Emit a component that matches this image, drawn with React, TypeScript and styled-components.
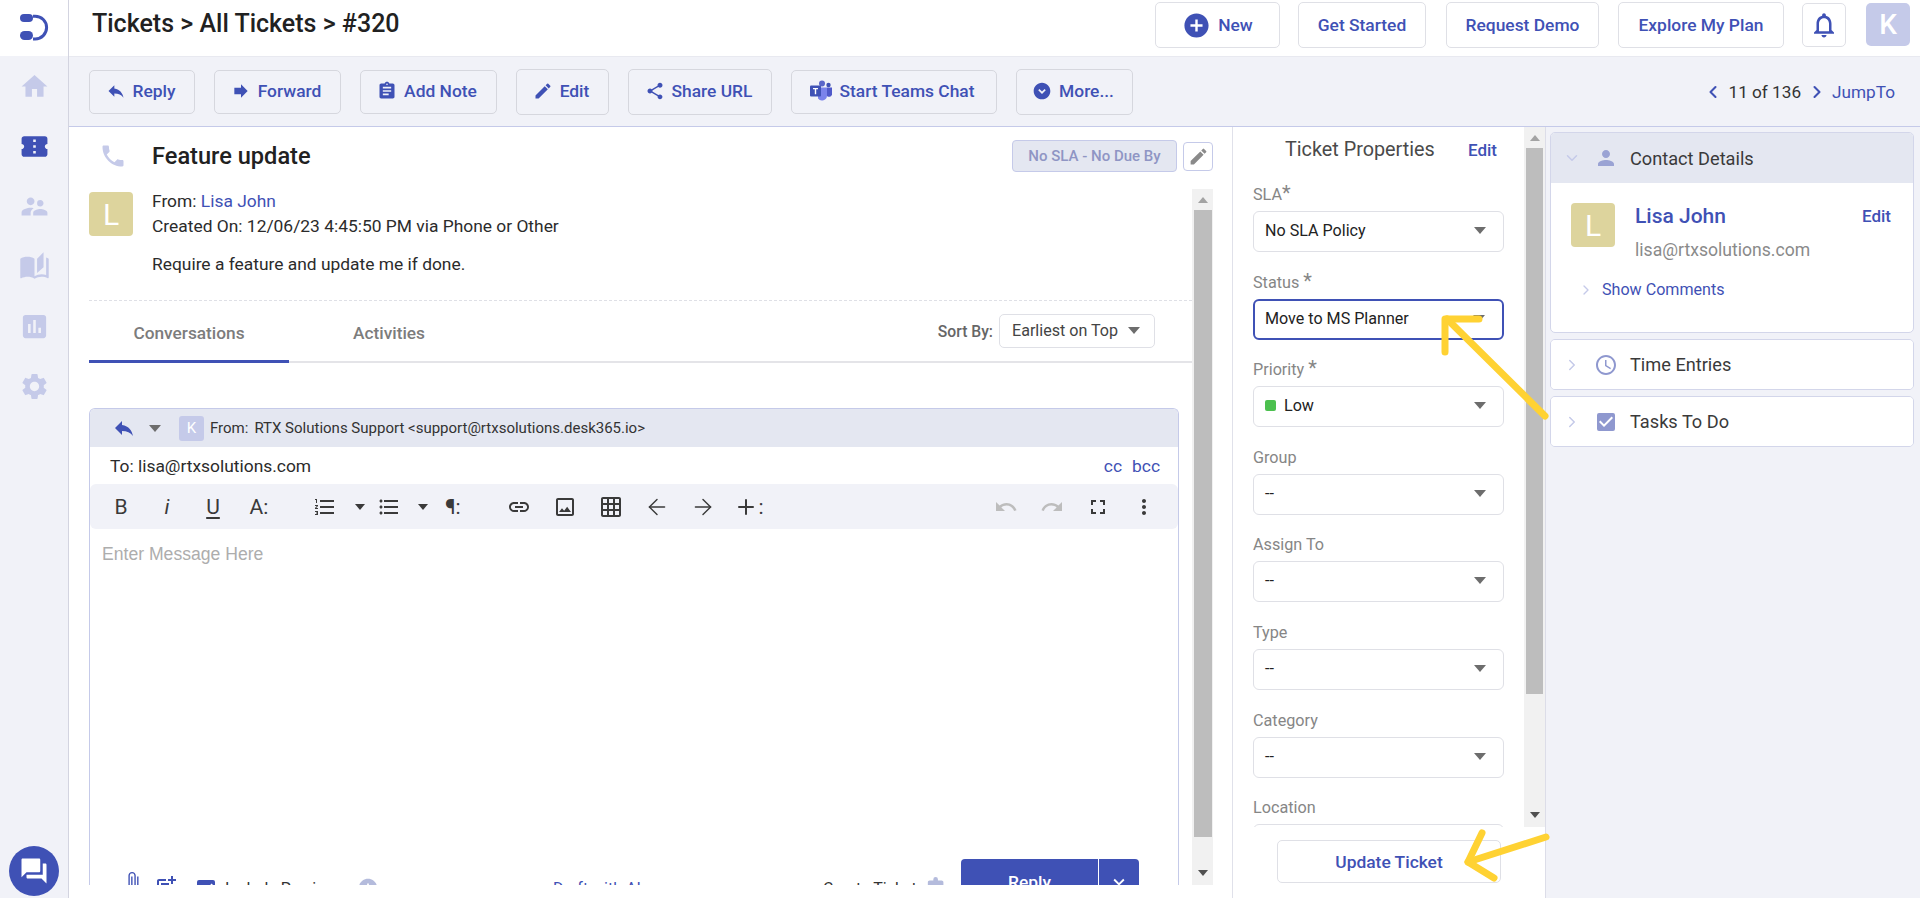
import React from "react";
import styled, { createGlobalStyle } from "styled-components";
import {
  MdAccessTime, MdAssessment, MdAssignment, MdAttachFile, MdAutoStories, MdCheckBox, MdConfirmationNumber, MdEdit,
  MdExpandCircleDown, MdExtension, MdForward, MdFormatListBulleted, MdFormatListNumbered, MdFullscreen, MdGridOn,
  MdHome, MdInfo, MdInsertLink, MdMoreVert, MdNotificationsNone, MdOutlineImage, MdOutlinePostAdd, MdPerson, MdPhone,
  MdQuestionAnswer, MdRedo, MdReply, MdSettings, MdShare, MdSupervisorAccount, MdUndo, MdAddCircle, MdKeyboardArrowDown
} from "react-icons/md";
import { ChevronDown, ChevronLeft, ChevronRight, ArrowLeft, ArrowRight, Plus } from "lucide-react";

const primary = "#3f51b5";
const pale = "#c5cae9";
const panelBg = "#f1f2f8";
const line = "#dfe0e6";

const Global = createGlobalStyle`
  html, body { margin: 0; height: 100%; overflow: hidden; background: #fff; }
  body { font-family: Roboto, "Liberation Sans", sans-serif; color: #212121; }
  #root { height: 100%; }
  * { box-sizing: border-box; }
`;

const Page = styled.div`
  position: relative;
  display: flex;
  width: 1920px;
  height: 898px;
  overflow: hidden;
`;

const Sidebar = styled.nav`
  width: 69px;
  flex: none;
  display: flex;
  flex-direction: column;
  background: ${panelBg};
  border-right: 1px solid #d3d4e0;
`;

const LogoBox = styled.div`
  height: 56px;
  background: #fff;
  display: flex;
  align-items: center;
  justify-content: center;
`;

const NavItem = styled.div<{ $active?: boolean }>`
  height: 60px;
  display: flex;
  align-items: center;
  justify-content: center;
  color: ${(p) => (p.$active ? primary : pale)};
  font-size: 31px;
`;

const ChatFab = styled.button`
  margin: auto 0 2px 9px;
  width: 50px;
  height: 50px;
  border: none;
  padding: 0;
  border-radius: 50%;
  background: ${primary};
  color: #fff;
  font-size: 30px;
  display: flex;
  align-items: center;
  justify-content: center;
`;

const Main = styled.div`
  flex: 1;
  min-width: 0;
  display: flex;
  flex-direction: column;
`;

const Header = styled.header`
  height: 57px;
  flex: none;
  display: flex;
  align-items: flex-start;
  padding: 2px 10px 0 23px;
  border-bottom: 1px solid #e8e9f0;
`;

const PageTitle = styled.h1`
  margin: 0 auto 0 0;
  font-size: 25px;
  line-height: 44px;
  font-weight: 500;
  color: #212121;
`;

const TopButton = styled.button<{ $w: number; $ml: number }>`
  width: ${(p) => p.$w}px;
  height: 46px;
  margin-left: ${(p) => p.$ml}px;
  border: 1px solid ${line};
  border-radius: 5px;
  background: #fff;
  color: ${primary};
  font: 500 17.4px Roboto, sans-serif;
  display: flex;
  align-items: center;
  justify-content: center;
  gap: 7px;
  padding: 0;
`;

const BellButton = styled(TopButton)`
  height: 44px;
  margin-top: 1px;
  font-size: 30px;
`;

const UserTile = styled.div`
  width: 44px;
  height: 43px;
  margin: 1px 0 0 20px;
  border-radius: 5px;
  background: ${pale};
  color: #fff;
  font-size: 28px;
  font-weight: 500;
  display: flex;
  align-items: center;
  justify-content: center;
`;

const Toolbar = styled.div`
  height: 70px;
  flex: none;
  display: flex;
  align-items: center;
  padding: 0 25px 0 20px;
  background: ${panelBg};
  border-bottom: 1px solid ${pale};
`;

const ActionButton = styled.button<{ $w: number; $tall?: boolean }>`
  width: ${(p) => p.$w}px;
  height: ${(p) => (p.$tall ? 46 : 44)}px;
  margin-right: 19px;
  border: 1px solid #d6d7de;
  border-radius: 5px;
  background: ${panelBg};
  color: ${primary};
  font: 500 17.4px Roboto, sans-serif;
  display: flex;
  align-items: center;
  justify-content: center;
  gap: 7px;
  padding: 0 3px 2px 0;
  svg { font-size: 20px; flex: none; }
`;

const Pager = styled.div`
  margin-left: auto;
  display: flex;
  align-items: center;
  font-size: 17.2px;
  color: #333;
  svg { color: ${primary}; }
`;

const PagerCount = styled.span`
  margin: 0 6px 0 5px;
`;

const PagerLink = styled.span`
  color: ${primary};
  margin-left: 5px;
`;

const Body = styled.div`
  flex: 1;
  min-height: 0;
  display: flex;
`;

const TicketPanel = styled.section`
  width: 1164px;
  flex: none;
  padding: 0 19px 0 20px;
  border-right: 1px solid #e0e1ea;
`;

const SubjectRow = styled.div`
  height: 58px;
  margin-bottom: 4px;
  display: flex;
  align-items: center;
`;

const PhoneSlot = styled.div`
  width: 63px;
  flex: none;
  padding-left: 10px;
  display: flex;
  color: ${pale};
  font-size: 28px;
`;

const Subject = styled.h2`
  margin: 0 auto 0 0;
  font-size: 23.6px;
  font-weight: 500;
`;

const SlaChip = styled.div`
  width: 165px;
  height: 32px;
  border: 1px solid ${pale};
  border-radius: 4px;
  background: #e4e7f1;
  color: #8f95c4;
  font-size: 15px;
  font-weight: 500;
  display: flex;
  align-items: center;
  justify-content: center;
`;

const PenButton = styled.div`
  width: 30px;
  height: 29px;
  margin-left: 6px;
  border: 1px solid ${pale};
  border-radius: 4px;
  color: #8a8a8a;
  font-size: 21px;
  display: flex;
  align-items: center;
  justify-content: center;
`;

const ScrollRow = styled.div`
  height: 696px;
  display: flex;
`;

const ScrollContent = styled.div`
  flex: 1;
  min-width: 0;
  overflow: hidden;
`;

const Track = styled.div<{ $h: number; $w: number }>`
  width: ${(p) => p.$w}px;
  height: ${(p) => p.$h}px;
  flex: none;
  background: #f1f1f1;
  display: flex;
  flex-direction: column;
  align-items: center;
`;

const TrackArrow = styled.div<{ $down?: boolean; $h: number }>`
  height: ${(p) => p.$h}px;
  flex: none;
  display: flex;
  align-items: center;
  justify-content: center;
  &::after {
    content: "";
    border-left: 5px solid transparent;
    border-right: 5px solid transparent;
    ${(p) => (p.$down ? "border-top: 6px solid #505050;" : "border-bottom: 6px solid #a3a3a3;")}
  }
`;

const Thumb = styled.div<{ $h: number; $w: number }>`
  width: ${(p) => p.$w}px;
  height: ${(p) => p.$h}px;
  flex: none;
  background: #bdbdbd;
`;

const Spacer = styled.div`
  flex: 1;
`;

const SenderRow = styled.div`
  display: flex;
  padding-top: 3px;
`;

const Avatar = styled.div<{ $size: number }>`
  width: ${(p) => p.$size}px;
  height: ${(p) => p.$size}px;
  flex: none;
  border-radius: 4px;
  background: #ddd49d;
  color: #fff;
  font-size: 30px;
  display: flex;
  align-items: center;
  justify-content: center;
`;

const SenderText = styled.div`
  margin: -3px 0 0 19px;
  font-size: 17.4px;
  line-height: 25px;
  color: #2b2b2b;
`;

const NameLink = styled.span`
  color: ${primary};
`;

const Message = styled.p`
  margin: 13px 0 0 63px;
  font-size: 17.4px;
  line-height: 25px;
  color: #2b2b2b;
`;

const SenderBlock = styled.div`
  height: 112px;
  border-bottom: 1px dashed ${line};
`;

const TabBar = styled.div`
  height: 62px;
  display: flex;
  align-items: flex-end;
  border-bottom: 2px solid #e4e4e8;
`;

const Tab = styled.div<{ $active?: boolean }>`
  width: 200px;
  height: 61px;
  margin-bottom: -2px;
  padding-top: 20px;
  text-align: center;
  font-size: 17.3px;
  font-weight: 500;
  line-height: 22px;
  color: #7c7c7c;
  border-bottom: 3px solid ${(p) => (p.$active ? primary : "transparent")};
`;

const SortBox = styled.div`
  margin: 0 37px 13px auto;
  display: flex;
  align-items: center;
  font-size: 15.7px;
  font-weight: 500;
  color: #666;
`;

const SortSelect = styled.div`
  width: 156px;
  height: 34px;
  margin-left: 6px;
  padding: 0 14px 2px 12px;
  border: 1px solid ${line};
  border-radius: 5px;
  display: flex;
  align-items: center;
  justify-content: space-between;
  font-weight: 400;
  font-size: 16.1px;
  color: #444;
`;

const Caret = styled.span<{ $w?: number; $color?: string }>`
  display: block;
  flex: none;
  border-left: ${(p) => (p.$w ?? 12) / 2}px solid transparent;
  border-right: ${(p) => (p.$w ?? 12) / 2}px solid transparent;
  border-top: ${(p) => (p.$w ?? 12) / 2 + 1}px solid ${(p) => p.$color ?? "#6d6d6d"};
`;

const Editor = styled.div`
  width: 1090px;
  margin-top: 45px;
  border: 1px solid ${pale};
  border-bottom: none;
  border-radius: 6px 6px 0 0;
`;

const EditorHead = styled.div`
  height: 38px;
  display: flex;
  align-items: center;
  background: #e4e7f1;
  border-radius: 5px 5px 0 0;
  padding-left: 22px;
  font-size: 15px;
  color: #333;
`;

const ReplyGlyph = styled.span`
  display: flex;
  font-size: 24px;
  color: ${primary};
`;

const HeadCaret = styled.span`
  margin: 0 18px 0 13px;
`;

const SmallTile = styled.div`
  width: 25px;
  height: 25px;
  margin-right: 6px;
  border-radius: 3px;
  background: ${pale};
  color: #fff;
  font-size: 15px;
  display: flex;
  align-items: center;
  justify-content: center;
`;

const FromValue = styled.span`
  margin-left: 6px;
`;

const ToRow = styled.div`
  height: 37px;
  display: flex;
  align-items: center;
  padding: 0 18px 0 20px;
  font-size: 17.4px;
  color: #2b2b2b;
`;

const CcLinks = styled.div`
  margin-left: auto;
  display: flex;
  gap: 10px;
  color: ${primary};
`;

const FormatBar = styled.div`
  height: 45px;
  display: flex;
  align-items: center;
  padding: 0 11px 0 8px;
  background: ${panelBg};
  border-radius: 6px;
`;

const Tool = styled.div<{ $w?: number; $ml?: number; $off?: boolean }>`
  width: ${(p) => p.$w ?? 46}px;
  margin-left: ${(p) => p.$ml ?? 0}px;
  flex: none;
  display: flex;
  align-items: center;
  justify-content: center;
  color: ${(p) => (p.$off ? "#bdbdbd" : "#3a3a3a")};
  font-size: 24px;
  line-height: 24px;
`;

const ToolText = styled.span<{ $italic?: boolean; $under?: boolean }>`
  font-size: 21px;
  font-weight: 400;
  line-height: 24px;
  font-style: ${(p) => (p.$italic ? "italic" : "normal")};
  text-decoration: ${(p) => (p.$under ? "underline" : "none")};
  text-underline-offset: 3px;
`;

const ToolPush = styled.div`
  margin-left: auto;
`;

const Placeholder = styled.div`
  height: 330px;
  padding: 13px 0 0 12px;
  font: 17.6px "Liberation Sans", Arial, sans-serif;
  line-height: 24px;
  color: #adadad;
`;

const SendRow = styled.div`
  height: 40px;
  display: flex;
  align-items: flex-start;
  padding-left: 32px;
`;

const SendIcon = styled.div<{ $ml: number; $mt: number; $color: string; $size: number }>`
  display: flex;
  margin: ${(p) => p.$mt}px 0 0 ${(p) => p.$ml}px;
  color: ${(p) => p.$color};
  font-size: ${(p) => p.$size}px;
`;

const SendLabel = styled.div<{ $w: number; $ml: number; $color: string }>`
  width: ${(p) => p.$w}px;
  margin: 20px 0 0 ${(p) => p.$ml}px;
  font-size: 16px;
  line-height: 20px;
  font-weight: 400;
  color: ${(p) => p.$color};
  white-space: nowrap;
`;

const SendSplit = styled.div`
  width: 178px;
  height: 44px;
  margin-left: 13px;
  display: flex;
  border-radius: 4px 4px 0 0;
  background: ${primary};
  color: #fff;
  font-size: 17.4px;
  font-weight: 500;
`;

const SendMain = styled.div`
  width: 138px;
  padding-top: 13px;
  text-align: center;
  border-right: 1px solid #fff;
`;

const SendMenu = styled.div`
  flex: 1;
  padding-top: 12px;
  display: flex;
  justify-content: center;
  font-size: 22px;
`;

const PropsPanel = styled.aside`
  width: 313px;
  flex: none;
  display: flex;
  flex-direction: column;
  border-right: 1px solid #dcdde8;
`;

const PropsTop = styled.div`
  height: 700px;
  display: flex;
`;

const PropsScroll = styled.div`
  flex: 1;
  min-width: 0;
  overflow: hidden;
  padding-left: 20px;
`;

const PropsTitleRow = styled.div`
  height: 55px;
  padding: 9px 27px 0 32px;
  display: flex;
  justify-content: space-between;
  align-items: flex-start;
  line-height: 28px;
`;

const PropsTitle = styled.div`
  font-size: 19.8px;
  color: #4a4a4a;
`;

const EditLink = styled.span`
  font-size: 17px;
  font-weight: 500;
  color: ${primary};
`;

const Field = styled.div`
  width: 251px;
  height: 70px;
  margin-bottom: 17.6px;
`;

const FieldLabel = styled.div`
  height: 24px;
  margin: 1px 0 4px;
  font-size: 16.2px;
  line-height: 24px;
  color: #868686;
`;

const RequiredStar = styled.span`
  font-size: 20px;
  line-height: 20px;
`;

const SelectBox = styled.div<{ $focus?: boolean }>`
  height: 41px;
  padding: 0 17px 2px ${(p) => (p.$focus ? 10 : 11)}px;
  border: ${(p) => (p.$focus ? `2px solid ${primary}` : `1px solid ${line}`)};
  border-radius: 6px;
  display: flex;
  align-items: center;
  font-size: 16.1px;
  color: #222;
`;

const PriorityDot = styled.span`
  width: 11px;
  height: 11px;
  margin-right: 8px;
  border-radius: 2px;
  background: #4cc04f;
`;

const SelectValue = styled.span`
  margin-right: auto;
`;

const PropsFoot = styled.div`
  flex: 1;
  padding: 13px 0 0 44px;
`;

const UpdateButton = styled.button`
  width: 224px;
  height: 43px;
  padding: 0;
  background: #fff;
  border: 1px solid ${line};
  border-radius: 5px;
  color: ${primary};
  font: 500 17.4px Roboto, sans-serif;
`;

const ContactColumn = styled.div`
  flex: 1;
  padding: 5px 6px 0 4px;
  background: ${panelBg};
  display: flex;
  flex-direction: column;
  gap: 6px;
`;

const Card = styled.div`
  border: 1px solid #d3d6ea;
  border-radius: 5px;
  background: #fff;
  overflow: hidden;
`;

const CardHead = styled.div<{ $open?: boolean }>`
  height: ${(p) => (p.$open ? 50 : 49)}px;
  display: flex;
  align-items: center;
  padding-left: 12px;
  background: ${(p) => (p.$open ? "#e4e7f1" : "#fff")};
  font-size: 18.2px;
  color: #3a3a3a;
`;

const CardIcon = styled.div<{ $color: string }>`
  width: 24px;
  margin: 0 12px 0 13px;
  display: flex;
  justify-content: center;
  font-size: 26px;
  color: ${(p) => p.$color};
`;

const ContactBody = styled.div`
  height: 149px;
  padding: 20px 22px 0 20px;
`;

const ContactTop = styled.div`
  display: flex;
`;

const ContactInfo = styled.div`
  flex: 1;
  margin-left: 20px;
`;

const ContactNameRow = styled.div`
  display: flex;
  justify-content: space-between;
  align-items: center;
  height: 26px;
`;

const ContactName = styled.span`
  font-size: 21px;
  font-weight: 500;
  color: ${primary};
`;

const ContactEmail = styled.div`
  margin-top: 10px;
  font-size: 17.6px;
  line-height: 22px;
  color: #8a8a8a;
`;

const CommentsRow = styled.div`
  display: flex;
  align-items: center;
  margin: 19px 0 0 7px;
  font-size: 16.1px;
  color: ${primary};
  svg { color: ${pale}; margin-right: 8px; }
`;

const ArrowOverlay = styled.svg`
  position: absolute;
  inset: 0;
  pointer-events: none;
`;

const LogoMark = () => (
  <svg width="30" height="28" viewBox="0 0 30 28" fill="none">
    <path d="M14 2.2h2.2A11.3 11.3 0 0 1 16.2 25H14" stroke={primary} strokeWidth="3" />
    <rect x="1" y="0" width="13" height="8" rx="4" fill={primary} />
    <rect x="1" y="17" width="13" height="9" rx="4.5" fill={primary} />
  </svg>
);

const TeamsMark = () => (
  <svg width="22" height="22" viewBox="0 0 22 22">
    <circle cx="12" cy="3.5" r="3" fill="#5b67c9" />
    <circle cx="18.5" cy="5" r="2.2" fill="#3f51b5" />
    <path d="M8 7.5h9v8a5 5 0 0 1-9 3z" fill="#7b83eb" />
    <path d="M17 7.500h5v7a3 3 0 0 1-5 1.5z" fill="#5059c9" />
    <rect x="0" y="5.5" width="11" height="11" rx="1" fill="#3f51b5" />
    <path d="M3 8h5v1.3H6.200v5H4.800v-5H3z" fill="#fff" />
  </svg>
);

const fields = ["Group", "Assign To", "Type", "Category", "Location"];

const SelectField: React.FC<{ label: string; star?: string; value: string; focus?: boolean; dot?: boolean }> = ({ label, star, value, focus, dot }) => (
  <Field>
    <FieldLabel>{label}{star && <RequiredStar>{star}</RequiredStar>}</FieldLabel>
    <SelectBox $focus={focus}>
      {dot && <PriorityDot />}
      <SelectValue>{value}</SelectValue>
      <Caret />
    </SelectBox>
  </Field>
);

const App = () => (
  <Page>
    <Global />
    <Sidebar>
      <LogoBox><LogoMark /></LogoBox>
      <NavItem><MdHome /></NavItem>
      <NavItem $active><MdConfirmationNumber /></NavItem>
      <NavItem><MdSupervisorAccount /></NavItem>
      <NavItem><MdAutoStories /></NavItem>
      <NavItem><MdAssessment /></NavItem>
      <NavItem><MdSettings /></NavItem>
      <ChatFab><MdQuestionAnswer /></ChatFab>
    </Sidebar>

    <Main>
      <Header>
        <PageTitle>Tickets &gt; All Tickets &gt; #320</PageTitle>
        <TopButton $w={125} $ml={0}>
          <MdAddCircle size={29} />New
        </TopButton>
        <TopButton $w={128} $ml={18}>Get Started</TopButton>
        <TopButton $w={153} $ml={20}>Request Demo</TopButton>
        <TopButton $w={166} $ml={19}>Explore My Plan</TopButton>
        <BellButton $w={44} $ml={18}><MdNotificationsNone /></BellButton>
        <UserTile>K</UserTile>
      </Header>

      <Toolbar>
        <ActionButton $w={106}><MdReply />Reply</ActionButton>
        <ActionButton $w={127}><MdForward />Forward</ActionButton>
        <ActionButton $w={137}><MdAssignment />Add Note</ActionButton>
        <ActionButton $w={93} $tall><MdEdit />Edit</ActionButton>
        <ActionButton $w={144} $tall><MdShare />Share URL</ActionButton>
        <ActionButton $w={206}><TeamsMark />Start Teams Chat</ActionButton>
        <ActionButton $w={117} $tall><MdExpandCircleDown />More...</ActionButton>
        <Pager>
          <ChevronLeft size={20} strokeWidth={2.5} />
          <PagerCount>11 of 136</PagerCount>
          <ChevronRight size={20} strokeWidth={2.5} />
          <PagerLink>JumpTo</PagerLink>
        </Pager>
      </Toolbar>

      <Body>
        <TicketPanel>
          <SubjectRow>
            <PhoneSlot><MdPhone /></PhoneSlot>
            <Subject>Feature update</Subject>
            <SlaChip>No SLA - No Due By</SlaChip>
            <PenButton><MdEdit /></PenButton>
          </SubjectRow>
          <ScrollRow>
            <ScrollContent>
              <SenderBlock>
                <SenderRow>
                  <Avatar $size={44}>L</Avatar>
                  <SenderText>
                    <div>From: <NameLink>Lisa John</NameLink></div>
                    <div>Created On: 12/06/23 4:45:50 PM via Phone or Other</div>
                  </SenderText>
                </SenderRow>
                <Message>Require a feature and update me if done.</Message>
              </SenderBlock>
              <TabBar>
                <Tab $active>Conversations</Tab>
                <Tab>Activities</Tab>
                <SortBox>
                  Sort By:
                  <SortSelect>Earliest on Top<Caret /></SortSelect>
                </SortBox>
              </TabBar>
              <Editor>
                <EditorHead>
                  <ReplyGlyph><MdReply /></ReplyGlyph>
                  <HeadCaret><Caret /></HeadCaret>
                  <SmallTile>K</SmallTile>
                  From:<FromValue>RTX Solutions Support &lt;support@rtxsolutions.desk365.io&gt;</FromValue>
                </EditorHead>
                <ToRow>
                  To: lisa@rtxsolutions.com
                  <CcLinks><span>cc</span><span>bcc</span></CcLinks>
                </ToRow>
                <FormatBar>
                  <Tool><ToolText>B</ToolText></Tool>
                  <Tool><ToolText $italic>i</ToolText></Tool>
                  <Tool><ToolText $under>U</ToolText></Tool>
                  <Tool><ToolText>A:</ToolText></Tool>
                  <Tool $w={42} $ml={22}><MdFormatListNumbered /></Tool>
                  <Tool $w={28}><Caret $w={10} $color="#3a3a3a" /></Tool>
                  <Tool $w={30}><MdFormatListBulleted /></Tool>
                  <Tool $w={38}><Caret $w={10} $color="#3a3a3a" /></Tool>
                  <Tool $w={22}><ToolText>¶:</ToolText></Tool>
                  <Tool $ml={32}><MdInsertLink /></Tool>
                  <Tool><MdOutlineImage /></Tool>
                  <Tool><MdGridOn /></Tool>
                  <Tool><ArrowLeft size={26} strokeWidth={1.3} /></Tool>
                  <Tool><ArrowRight size={26} strokeWidth={1.3} /></Tool>
                  <Tool><Plus size={24} strokeWidth={2} /><ToolText>:</ToolText></Tool>
                  <ToolPush />
                  <Tool $off><MdUndo /></Tool>
                  <Tool $off><MdRedo /></Tool>
                  <Tool><MdFullscreen /></Tool>
                  <Tool><MdMoreVert /></Tool>
                </FormatBar>
                <Placeholder>Enter Message Here</Placeholder>
                <SendRow>
                  <SendIcon $ml={0} $mt={12} $color={primary} $size={22}><MdAttachFile /></SendIcon>
                  <SendIcon $ml={10} $mt={15} $color={primary} $size={24}><MdOutlinePostAdd /></SendIcon>
                  <SendIcon $ml={16} $mt={18} $color={primary} $size={24}><MdCheckBox /></SendIcon>
                  <SendLabel $w={132} $ml={7} $color="#333">Include Preview</SendLabel>
                  <SendIcon $ml={0} $mt={18} $color="#b4bbdc" $size={22}><MdInfo /></SendIcon>
                  <SendLabel $w={270} $ml={174} $color={primary}>Draft with AI</SendLabel>
                  <SendLabel $w={103} $ml={0} $color="#333">Create Ticket</SendLabel>
                  <SendIcon $ml={0} $mt={17} $color="#b4bbdc" $size={22}><MdExtension /></SendIcon>
                  <SendSplit>
                    <SendMain>Reply</SendMain>
                    <SendMenu><MdKeyboardArrowDown /></SendMenu>
                  </SendSplit>
                </SendRow>
              </Editor>
            </ScrollContent>
            <Track $h={696} $w={21}>
              <TrackArrow $h={21} />
              <Thumb $h={627} $w={18} />
              <Spacer />
              <TrackArrow $down $h={24} />
            </Track>
          </ScrollRow>
        </TicketPanel>

        <PropsPanel>
          <PropsTop>
            <PropsScroll>
              <PropsTitleRow>
                <PropsTitle>Ticket Properties</PropsTitle>
                <EditLink>Edit</EditLink>
              </PropsTitleRow>
              <SelectField label="SLA" star="*" value="No SLA Policy" />
              <SelectField label="Status " star="*" value="Move to MS Planner" focus />
              <SelectField label="Priority " star="*" value="Low" dot />
              {fields.map((f) => <SelectField key={f} label={f} value="--" />)}
            </PropsScroll>
            <Track $h={700} $w={21}>
              <TrackArrow $h={21} />
              <Thumb $h={546} $w={17} />
              <Spacer />
              <TrackArrow $down $h={24} />
            </Track>
          </PropsTop>
          <PropsFoot>
            <UpdateButton>Update Ticket</UpdateButton>
          </PropsFoot>
        </PropsPanel>

        <ContactColumn>
          <Card>
            <CardHead $open>
              <ChevronDown size={18} color={pale} />
              <CardIcon $color="#9aa3d4"><MdPerson /></CardIcon>
              Contact Details
            </CardHead>
            <ContactBody>
              <ContactTop>
                <Avatar $size={44}>L</Avatar>
                <ContactInfo>
                  <ContactNameRow>
                    <ContactName>Lisa John</ContactName>
                    <EditLink>Edit</EditLink>
                  </ContactNameRow>
                  <ContactEmail>lisa@rtxsolutions.com</ContactEmail>
                </ContactInfo>
              </ContactTop>
              <CommentsRow><ChevronRight size={16} />Show Comments</CommentsRow>
            </ContactBody>
          </Card>
          <Card>
            <CardHead>
              <ChevronRight size={18} color={pale} />
              <CardIcon $color="#8f98cf"><MdAccessTime /></CardIcon>
              Time Entries
            </CardHead>
          </Card>
          <Card>
            <CardHead>
              <ChevronRight size={18} color={pale} />
              <CardIcon $color="#8f98cf"><MdCheckBox /></CardIcon>
              Tasks To Do
            </CardHead>
          </Card>
        </ContactColumn>
      </Body>
    </Main>

    <ArrowOverlay width="1920" height="898" viewBox="0 0 1920 898" fill="none" stroke="#ffd233" strokeWidth="7" strokeLinecap="round" strokeLinejoin="round">
      <path d="M1545 416 L1447 319" />
      <path d="M1479 319 H1445 V352" />
      <path d="M1546 837 L1468 862" />
      <path d="M1482 833 L1468 862 L1494 878" />
    </ArrowOverlay>
  </Page>
);

export default App;
